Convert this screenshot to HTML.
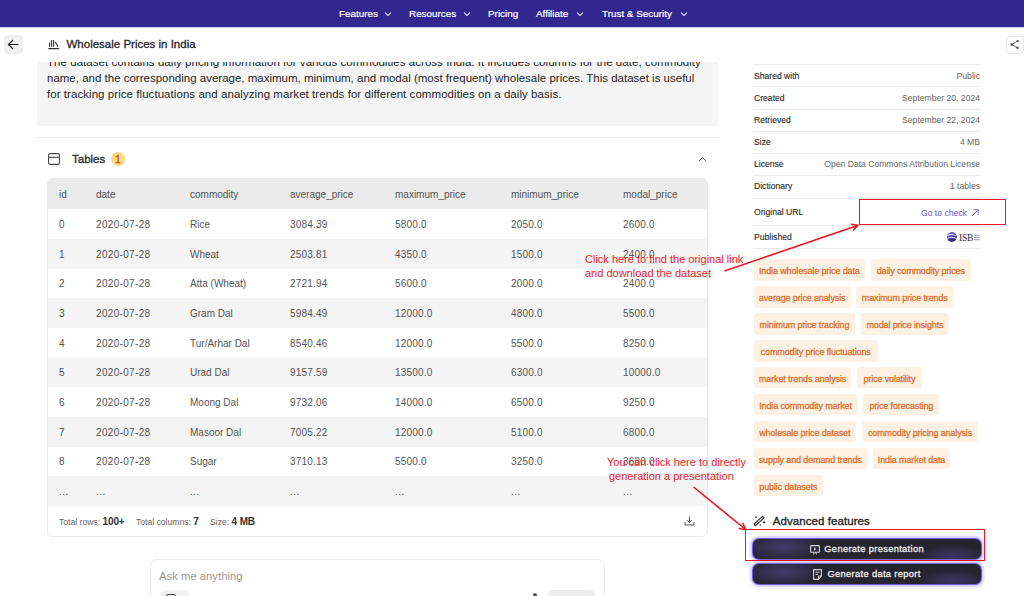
<!DOCTYPE html>
<html><head><meta charset="utf-8">
<style>
*{box-sizing:border-box;margin:0;padding:0}
html,body{width:1024px;height:596px;overflow:hidden;background:#fff;font-family:"Liberation Sans",sans-serif;color:#222}
.a{position:absolute;white-space:nowrap}
#hdr{position:absolute;left:0;top:0;width:1024px;height:27px;background:#31278f;box-shadow:0 1px 0 rgba(120,100,230,.35)}
.nav{position:absolute;top:7.8px;color:#fff;font-size:9.9px;line-height:12px;-webkit-text-stroke:0.2px #fff}
.chev{position:absolute;top:10.5px}
#desc{position:absolute;left:37px;top:20px;width:681px;height:106px;background:#f5f5f5;border-radius:0 0 3px 3px}
.dl{position:absolute;left:47px;font-size:11.5px;color:#262626;line-height:16px}
#titlebar{position:absolute;left:0;top:27px;width:1024px;height:35px;background:#fff}
.sep{position:absolute;height:1px;background:#ebebeb}
.th,.td{position:absolute;font-size:10px;color:#555;line-height:12px}
.row{position:absolute;left:48px;width:659px}
.sl{position:absolute;left:754px;font-size:8.6px;color:#2a2a2a;line-height:10px;-webkit-text-stroke:0.12px #2a2a2a}
.sv{position:absolute;right:44px;font-size:8.6px;color:#666;line-height:10px;text-align:right}
.tag{position:absolute;height:21.6px;background:#fdf1e3;border-radius:3px;color:#dc7334;font-size:9px;letter-spacing:-0.13px;line-height:21px;padding-top:2.2px;text-align:center;-webkit-text-stroke:0.3px #dc7334}
.red{color:#e8232a;font-size:11px;line-height:13.7px}
</style></head><body>

<!-- description (scrolled, partially hidden) -->
<div id="desc"></div>
<div class="dl a" style="top:54px;letter-spacing:0.045px">The dataset contains daily pricing information for various commodities across India. It includes columns for the date, commodity</div>
<div class="dl a" style="top:70px">name, and the corresponding average, maximum, minimum, and modal (most frequent) wholesale prices. This dataset is useful</div>
<div class="dl a" style="top:86px;letter-spacing:0.057px">for tracking price fluctuations and analyzing market trends for different commodities on a daily basis.</div>

<!-- title bar -->
<div id="titlebar"></div>
<div class="a" style="left:4px;top:35px;width:19px;height:19px;background:#f0f0f0;border-radius:4px"></div>
<svg class="a" style="left:7px;top:38px" width="13" height="13" viewBox="0 0 13 13"><path d="M11.5 6.5H1.5M6 2L1.5 6.5L6 11" fill="none" stroke="#222" stroke-width="1.2"/></svg>
<svg class="a" style="left:48px;top:39px" width="12" height="11" viewBox="0 0 12 11"><path d="M1.5 3.5v4.3M3.5 1v6.8M5.5 1v6.8M7 2.8L10.2 7.8M0.3 9.6h11" fill="none" stroke="#333" stroke-width="1.1"/></svg>
<div class="a" style="left:66.5px;top:37.3px;font-size:11.5px;line-height:14px;color:#262626;-webkit-text-stroke:0.3px #262626">Wholesale Prices in India</div>
<div class="a" style="left:1006px;top:36px;width:18px;height:17.5px;border:1px solid #e8e8e8;border-radius:4px;background:#fff"></div>
<svg class="a" style="left:1010px;top:39px" width="10" height="11" viewBox="0 0 10 11"><path d="M7.7 2.1L1.7 5.5L7.5 8.8" fill="none" stroke="#555" stroke-width="0.9"/><circle cx="7.7" cy="2.1" r="1.2" fill="#555"/><circle cx="1.7" cy="5.5" r="1.2" fill="#555"/><circle cx="7.5" cy="8.8" r="1.2" fill="#555"/></svg>

<!-- header -->
<div id="hdr"></div>
<div class="nav a" style="left:339px">Features</div>
<div class="nav a" style="left:409px">Resources</div>
<div class="nav a" style="left:488px">Pricing</div>
<div class="nav a" style="left:536px">Affiliate</div>
<div class="nav a" style="left:602px">Trust &amp; Security</div>
<svg class="chev" style="left:384px" width="8" height="6" viewBox="0 0 8 6"><path d="M1 1.5L4 4.5L7 1.5" fill="none" stroke="#fff" stroke-width="1.05"/></svg>
<svg class="chev" style="left:463px" width="8" height="6" viewBox="0 0 8 6"><path d="M1 1.5L4 4.5L7 1.5" fill="none" stroke="#fff" stroke-width="1.05"/></svg>
<svg class="chev" style="left:576px" width="8" height="6" viewBox="0 0 8 6"><path d="M1 1.5L4 4.5L7 1.5" fill="none" stroke="#fff" stroke-width="1.05"/></svg>
<svg class="chev" style="left:680px" width="8" height="6" viewBox="0 0 8 6"><path d="M1 1.5L4 4.5L7 1.5" fill="none" stroke="#fff" stroke-width="1.05"/></svg>

<!-- separator above tables -->
<div class="sep" style="left:36px;top:137px;width:682px"></div>

<!-- Tables heading -->
<svg class="a" style="left:48px;top:153px" width="12" height="12" viewBox="0 0 12 12"><rect x="0.6" y="0.6" width="10.8" height="10.8" rx="1.5" fill="none" stroke="#444" stroke-width="1.1"/><path d="M0.6 4.3h10.8" stroke="#444" stroke-width="1.1"/></svg>
<div class="a" style="left:72px;top:152.8px;font-size:11.5px;color:#2e2e2e;line-height:13px;-webkit-text-stroke:0.35px #2e2e2e">Tables</div>
<div class="a" style="left:111px;top:152.3px;width:14px;height:14px;border-radius:7px;background:#fdd984;color:#c4501a;font-size:10.5px;line-height:14.5px;text-align:center;-webkit-text-stroke:0.3px #c4501a">1</div>
<svg class="a" style="left:698px;top:156px" width="9" height="6" viewBox="0 0 9 6"><path d="M1 5L4.5 1.5L8 5" fill="none" stroke="#555" stroke-width="1"/></svg>

<!-- table -->
<div class="a" style="left:47px;top:178px;width:661px;height:358.8px;border:1px solid #e8e8e8;border-radius:6px;overflow:hidden;background:#fff">
</div>
<div id="tbl"></div>
<div class="a" style="left:48px;top:179px;width:659px;height:30px;background:#ebebeb;border-radius:5px 5px 0 0"></div>
<div class="th a" style="left:59px;top:188.7px">id</div>
<div class="th a" style="left:96px;top:188.7px">date</div>
<div class="th a" style="left:190px;top:188.7px">commodity</div>
<div class="th a" style="left:290px;top:188.7px">average_price</div>
<div class="th a" style="left:395px;top:188.7px">maximum_price</div>
<div class="th a" style="left:511px;top:188.7px">minimum_price</div>
<div class="th a" style="left:623px;top:188.7px">modal_price</div>
<div class="td a" style="left:59px;top:218.8px;letter-spacing:0.2px">0</div>
<div class="td a" style="left:96px;top:218.8px;letter-spacing:0.33px">2020-07-28</div>
<div class="td a" style="left:190px;top:218.8px;letter-spacing:0px">Rice</div>
<div class="td a" style="left:290px;top:218.8px;letter-spacing:0.2px">3084.39</div>
<div class="td a" style="left:395px;top:218.8px;letter-spacing:0.2px">5800.0</div>
<div class="td a" style="left:511px;top:218.8px;letter-spacing:0.2px">2050.0</div>
<div class="td a" style="left:623px;top:218.8px;letter-spacing:0.2px">2600.0</div>
<div class="a" style="left:48px;top:239.20px;width:659px;height:29.62px;background:#f4f4f4"></div>
<div class="td a" style="left:59px;top:248.5px;letter-spacing:0.2px">1</div>
<div class="td a" style="left:96px;top:248.5px;letter-spacing:0.33px">2020-07-28</div>
<div class="td a" style="left:190px;top:248.5px;letter-spacing:0px">Wheat</div>
<div class="td a" style="left:290px;top:248.5px;letter-spacing:0.2px">2503.81</div>
<div class="td a" style="left:395px;top:248.5px;letter-spacing:0.2px">4350.0</div>
<div class="td a" style="left:511px;top:248.5px;letter-spacing:0.2px">1500.0</div>
<div class="td a" style="left:623px;top:248.5px;letter-spacing:0.2px">2400.0</div>
<div class="td a" style="left:59px;top:278.2px;letter-spacing:0.2px">2</div>
<div class="td a" style="left:96px;top:278.2px;letter-spacing:0.33px">2020-07-28</div>
<div class="td a" style="left:190px;top:278.2px;letter-spacing:0px">Atta (Wheat)</div>
<div class="td a" style="left:290px;top:278.2px;letter-spacing:0.2px">2721.94</div>
<div class="td a" style="left:395px;top:278.2px;letter-spacing:0.2px">5600.0</div>
<div class="td a" style="left:511px;top:278.2px;letter-spacing:0.2px">2000.0</div>
<div class="td a" style="left:623px;top:278.2px;letter-spacing:0.2px">2400.0</div>
<div class="a" style="left:48px;top:298.44px;width:659px;height:29.62px;background:#f4f4f4"></div>
<div class="td a" style="left:59px;top:307.9px;letter-spacing:0.2px">3</div>
<div class="td a" style="left:96px;top:307.9px;letter-spacing:0.33px">2020-07-28</div>
<div class="td a" style="left:190px;top:307.9px;letter-spacing:0px">Gram Dal</div>
<div class="td a" style="left:290px;top:307.9px;letter-spacing:0.2px">5984.49</div>
<div class="td a" style="left:395px;top:307.9px;letter-spacing:0.2px">12000.0</div>
<div class="td a" style="left:511px;top:307.9px;letter-spacing:0.2px">4800.0</div>
<div class="td a" style="left:623px;top:307.9px;letter-spacing:0.2px">5500.0</div>
<div class="td a" style="left:59px;top:337.6px;letter-spacing:0.2px">4</div>
<div class="td a" style="left:96px;top:337.6px;letter-spacing:0.33px">2020-07-28</div>
<div class="td a" style="left:190px;top:337.6px;letter-spacing:0px">Tur/Arhar Dal</div>
<div class="td a" style="left:290px;top:337.6px;letter-spacing:0.2px">8540.46</div>
<div class="td a" style="left:395px;top:337.6px;letter-spacing:0.2px">12000.0</div>
<div class="td a" style="left:511px;top:337.6px;letter-spacing:0.2px">5500.0</div>
<div class="td a" style="left:623px;top:337.6px;letter-spacing:0.2px">8250.0</div>
<div class="a" style="left:48px;top:357.68px;width:659px;height:29.62px;background:#f4f4f4"></div>
<div class="td a" style="left:59px;top:367.3px;letter-spacing:0.2px">5</div>
<div class="td a" style="left:96px;top:367.3px;letter-spacing:0.33px">2020-07-28</div>
<div class="td a" style="left:190px;top:367.3px;letter-spacing:0px">Urad Dal</div>
<div class="td a" style="left:290px;top:367.3px;letter-spacing:0.2px">9157.59</div>
<div class="td a" style="left:395px;top:367.3px;letter-spacing:0.2px">13500.0</div>
<div class="td a" style="left:511px;top:367.3px;letter-spacing:0.2px">6300.0</div>
<div class="td a" style="left:623px;top:367.3px;letter-spacing:0.2px">10000.0</div>
<div class="td a" style="left:59px;top:397.0px;letter-spacing:0.2px">6</div>
<div class="td a" style="left:96px;top:397.0px;letter-spacing:0.33px">2020-07-28</div>
<div class="td a" style="left:190px;top:397.0px;letter-spacing:0px">Moong Dal</div>
<div class="td a" style="left:290px;top:397.0px;letter-spacing:0.2px">9732.06</div>
<div class="td a" style="left:395px;top:397.0px;letter-spacing:0.2px">14000.0</div>
<div class="td a" style="left:511px;top:397.0px;letter-spacing:0.2px">6500.0</div>
<div class="td a" style="left:623px;top:397.0px;letter-spacing:0.2px">9250.0</div>
<div class="a" style="left:48px;top:416.92px;width:659px;height:29.62px;background:#f4f4f4"></div>
<div class="td a" style="left:59px;top:426.7px;letter-spacing:0.2px">7</div>
<div class="td a" style="left:96px;top:426.7px;letter-spacing:0.33px">2020-07-28</div>
<div class="td a" style="left:190px;top:426.7px;letter-spacing:0px">Masoor Dal</div>
<div class="td a" style="left:290px;top:426.7px;letter-spacing:0.2px">7005.22</div>
<div class="td a" style="left:395px;top:426.7px;letter-spacing:0.2px">12000.0</div>
<div class="td a" style="left:511px;top:426.7px;letter-spacing:0.2px">5100.0</div>
<div class="td a" style="left:623px;top:426.7px;letter-spacing:0.2px">6800.0</div>
<div class="td a" style="left:59px;top:456.4px;letter-spacing:0.2px">8</div>
<div class="td a" style="left:96px;top:456.4px;letter-spacing:0.33px">2020-07-28</div>
<div class="td a" style="left:190px;top:456.4px;letter-spacing:0px">Sugar</div>
<div class="td a" style="left:290px;top:456.4px;letter-spacing:0.2px">3710.13</div>
<div class="td a" style="left:395px;top:456.4px;letter-spacing:0.2px">5500.0</div>
<div class="td a" style="left:511px;top:456.4px;letter-spacing:0.2px">3250.0</div>
<div class="td a" style="left:623px;top:456.4px;letter-spacing:0.2px">3680.0</div>
<div class="a" style="left:48px;top:476.16px;width:659px;height:29.62px;background:#f4f4f4"></div>
<div class="td a" style="left:59px;top:485.8px;letter-spacing:0.5px">...</div>
<div class="td a" style="left:96px;top:485.8px;letter-spacing:0.5px">...</div>
<div class="td a" style="left:190px;top:485.8px;letter-spacing:0.5px">...</div>
<div class="td a" style="left:290px;top:485.8px;letter-spacing:0.5px">...</div>
<div class="td a" style="left:395px;top:485.8px;letter-spacing:0.5px">...</div>
<div class="td a" style="left:511px;top:485.8px;letter-spacing:0.5px">...</div>
<div class="td a" style="left:623px;top:485.8px;letter-spacing:0.5px">...</div>

<!-- table footer -->
<div class="a" style="left:59px;top:516.2px;font-size:8.6px;color:#666;line-height:11px">Total rows: <b style="font-size:10px;color:#333;letter-spacing:-0.1px">100+</b></div>
<div class="a" style="left:136px;top:516.2px;font-size:8.6px;color:#666;line-height:11px">Total columns: <b style="font-size:10px;color:#333;letter-spacing:-0.1px">7</b></div>
<div class="a" style="left:210px;top:516.2px;font-size:8.6px;color:#666;line-height:11px">Size: <b style="font-size:10px;color:#333;letter-spacing:-0.1px">4 MB</b></div>
<svg class="a" style="left:684px;top:516px" width="11" height="10" viewBox="0 0 11 10"><path d="M5.5 0.5v6M3 4.2L5.5 6.7L8 4.2M1 6v3h9V6" fill="none" stroke="#555" stroke-width="1"/></svg>

<!-- chat input -->
<div class="a" style="left:150px;top:559px;width:455px;height:60px;border:1px solid #e9e9e9;border-radius:7px;background:#fff"></div>
<div class="a" style="left:159px;top:570px;font-size:11.3px;color:#999;line-height:13px">Ask me anything</div>
<div class="a" style="left:160px;top:590px;width:30px;height:14px;border-radius:7px;background:#f0f0f0"></div>
<div class="a" style="left:166px;top:594px;width:10px;height:6px;border:1px solid #444;border-radius:2px"></div>
<div class="a" style="left:547px;top:590px;width:49px;height:14px;border-radius:7px;background:#ececec"></div>
<div class="a" style="left:533px;top:593px;width:4px;height:6px;border-radius:2px;background:#555"></div>

<!-- sidebar -->
<div class="sep" style="left:753px;top:64px;width:227px"></div>
<div class="sep" style="left:753px;top:86px;width:227px"></div>
<div class="sep" style="left:753px;top:109px;width:227px"></div>
<div class="sep" style="left:753px;top:131px;width:227px"></div>
<div class="sep" style="left:753px;top:153px;width:227px"></div>
<div class="sep" style="left:753px;top:175px;width:227px"></div>
<div class="sep" style="left:753px;top:198px;width:227px"></div>
<div class="sep" style="left:753px;top:225px;width:227px"></div>
<div class="sep" style="left:753px;top:248px;width:227px"></div>
<div class="sl a" style="top:71px">Shared with</div><div class="sv a" style="top:71px">Public</div>
<div class="sl a" style="top:93px">Created</div><div class="sv a" style="top:93px">September 20, 2024</div>
<div class="sl a" style="top:115px">Retrieved</div><div class="sv a" style="top:115px">September 22, 2024</div>
<div class="sl a" style="top:137px">Size</div><div class="sv a" style="top:137px">4 MB</div>
<div class="sl a" style="top:159px">License</div><div class="sv a" style="top:159px">Open Data Commons Attribution License</div>
<div class="sl a" style="top:181px">Dictionary</div><div class="sv a" style="top:181px">1 tables</div>
<div class="sl a" style="top:207px">Original URL</div>
<div class="a" style="left:921px;top:208px;font-size:8.6px;color:#6b55e6;line-height:10px">Go to check</div>
<svg class="a" style="left:971px;top:209px" width="8" height="8" viewBox="0 0 8 8"><path d="M0.8 7.2L7 1M2.2 0.8H7.2V5.8" fill="none" stroke="#6b55e6" stroke-width="0.9"/></svg>
<div class="sl a" style="top:232px">Published</div>
<svg class="a" style="left:946px;top:231px" width="34" height="12" viewBox="0 0 34 12"><defs><linearGradient id="gl" x1="0" y1="0" x2="1" y2="1"><stop offset="0" stop-color="#9a90e0"/><stop offset="0.5" stop-color="#4638a8"/><stop offset="1" stop-color="#1d1a3c"/></linearGradient></defs><circle cx="5.8" cy="6" r="5" fill="url(#gl)"/><path d="M1.2 4.6C3.5 3.2 6 3 9.5 4.5M1.5 7.3C4 6 7 6 10.6 7.4" stroke="#fff" stroke-width="0.9" fill="none"/><text x="13" y="9.6" font-family="Liberation Serif" font-size="9.6" fill="#2b2a3e" letter-spacing="-0.3">ISB</text><path d="M28.2 4.3h5.3M28.2 6.5h5.3M28.2 8.7h5.3" stroke="#7d70d4" stroke-width="0.8"/></svg>

<!-- tags -->
<div class="tag a" style="left:753.7px;top:259.1px;width:111.2px">India wholesale price data</div>
<div class="tag a" style="left:870.6px;top:259.1px;width:100.3px">daily commodity prices</div>
<div class="tag a" style="left:753.7px;top:286.1px;width:96.9px">average price analysis</div>
<div class="tag a" style="left:856.3px;top:286.1px;width:96.9px">maximum price trends</div>
<div class="tag a" style="left:753.7px;top:313.0px;width:101.5px">minimum price tracking</div>
<div class="tag a" style="left:860.9px;top:313.0px;width:88.1px">modal price insights</div>
<div class="tag a" style="left:753.7px;top:340.0px;width:124.0px">commodity price fluctuations</div>
<div class="tag a" style="left:753.7px;top:366.9px;width:97.8px">market trends analysis</div>
<div class="tag a" style="left:857.2px;top:366.9px;width:64.4px">price volatility</div>
<div class="tag a" style="left:753.7px;top:393.9px;width:103.7px">India commodity market</div>
<div class="tag a" style="left:863.1px;top:393.9px;width:76.4px">price forecasting</div>
<div class="tag a" style="left:753.7px;top:420.9px;width:102.1px">wholesale price dataset</div>
<div class="tag a" style="left:862.0px;top:420.9px;width:116.1px">commodity pricing analysis</div>
<div class="tag a" style="left:753.7px;top:447.8px;width:113.0px">supply and demand trends</div>
<div class="tag a" style="left:873.0px;top:447.8px;width:77.0px">India market data</div>
<div class="tag a" style="left:753.7px;top:474.8px;width:69.3px">public datasets</div>

<!-- advanced features -->
<svg class="a" style="left:753px;top:514px" width="14" height="13" viewBox="0 0 14 13"><path d="M1.06 9.98L2.54 11.62L10.94 4.02L9.46 2.38Z" fill="none" stroke="#333" stroke-width="1.2" stroke-linejoin="round"/><circle cx="3" cy="3.2" r="0.9" fill="#333"/><path d="M11.1 6.9L12.5 8.3L11.1 9.7L9.7 8.3Z" fill="#333"/><circle cx="7.3" cy="11" r="0.7" fill="#333"/></svg>
<div class="a" style="left:772.8px;top:515.2px;font-size:11.5px;letter-spacing:0.07px;color:#262626;line-height:13px;-webkit-text-stroke:0.35px #262626">Advanced features</div>
<div class="a" style="left:753px;top:539px;width:228px;height:20px;border-radius:6px;background:radial-gradient(ellipse 40px 14px at 30px 8px,#433c6c,rgba(67,60,108,0)),radial-gradient(ellipse 36px 10px at 200px 16px,#3c3564,rgba(60,53,100,0)),#26242f;box-shadow:0 0 0 1px #6e5ee6,0 0 0 2.5px rgba(205,195,252,.7),0 0 2px 3.5px rgba(215,205,255,.45)"></div>
<svg class="a" style="left:809.5px;top:544.5px" width="10" height="10" viewBox="0 0 10 10"><rect x="0.6" y="0.6" width="8.8" height="6.6" rx="0.8" fill="none" stroke="#d4d4d4" stroke-width="1.1"/><path d="M4 2.5v3l2.4-1.5z" fill="#d4d4d4"/><path d="M3 9.3l2-1.8l2 1.8" fill="none" stroke="#d4d4d4" stroke-width="0.9"/></svg>
<div class="a" style="left:824.3px;top:543.3px;font-size:9.3px;letter-spacing:0.34px;color:#ececec;line-height:12px;-webkit-text-stroke:0.3px #ececec">Generate presentation</div>
<div class="a" style="left:753px;top:564px;width:228px;height:20px;border-radius:6px;background:radial-gradient(ellipse 40px 14px at 30px 8px,#433c6c,rgba(67,60,108,0)),radial-gradient(ellipse 36px 10px at 200px 16px,#3c3564,rgba(60,53,100,0)),#26242f;box-shadow:0 0 0 1px #6e5ee6,0 0 0 2.5px rgba(205,195,252,.7),0 0 2px 3.5px rgba(215,205,255,.45)"></div>
<svg class="a" style="left:813px;top:568.5px" width="9" height="11" viewBox="0 0 9 11"><path d="M0.6 0.6h7.8v6.2l-3 3.6H0.6z" fill="none" stroke="#d4d4d4" stroke-width="1.1" stroke-linejoin="round"/><path d="M2.5 3.2h4M2.5 5.4h2.5" stroke="#d4d4d4" stroke-width="1"/><path d="M5.4 10.4V7h3" fill="none" stroke="#d4d4d4" stroke-width="1"/></svg>
<div class="a" style="left:827.5px;top:567.8px;font-size:9.3px;letter-spacing:0.34px;color:#ececec;line-height:12px;-webkit-text-stroke:0.3px #ececec">Generate data report</div>

<!-- annotations -->
<div class="red a" style="left:585px;top:253px">Click here to find the original link<br>and download the dataset</div>
<div class="red a" style="left:607px;top:456px">You can click here to directly</div><div class="red a" style="left:609px;top:469.7px">generation a presentation</div>
<div class="a" style="left:859px;top:199px;width:147px;height:26px;border:1.8px solid #ee1520"></div>
<div class="a" style="left:745px;top:529px;width:240px;height:32px;border:1.8px solid #ee1520"></div>
<svg class="a" style="left:0;top:0" width="1024" height="596" viewBox="0 0 1024 596">
<path d="M724.5 271L857.5 225.5" stroke="#ee1520" stroke-width="1.6" fill="none"/>
<path d="M851.6 224.2L858 225.3L853.6 230" stroke="#ee1520" stroke-width="1.6" fill="none" stroke-linecap="round" stroke-linejoin="round"/>
<path d="M693.5 487L745 529" stroke="#ee1520" stroke-width="1.6" fill="none"/>
<path d="M743 523.5L745.5 529.5L739.2 528.5" stroke="#ee1520" stroke-width="1.6" fill="none" stroke-linecap="round" stroke-linejoin="round"/>
</svg>

</body></html>
